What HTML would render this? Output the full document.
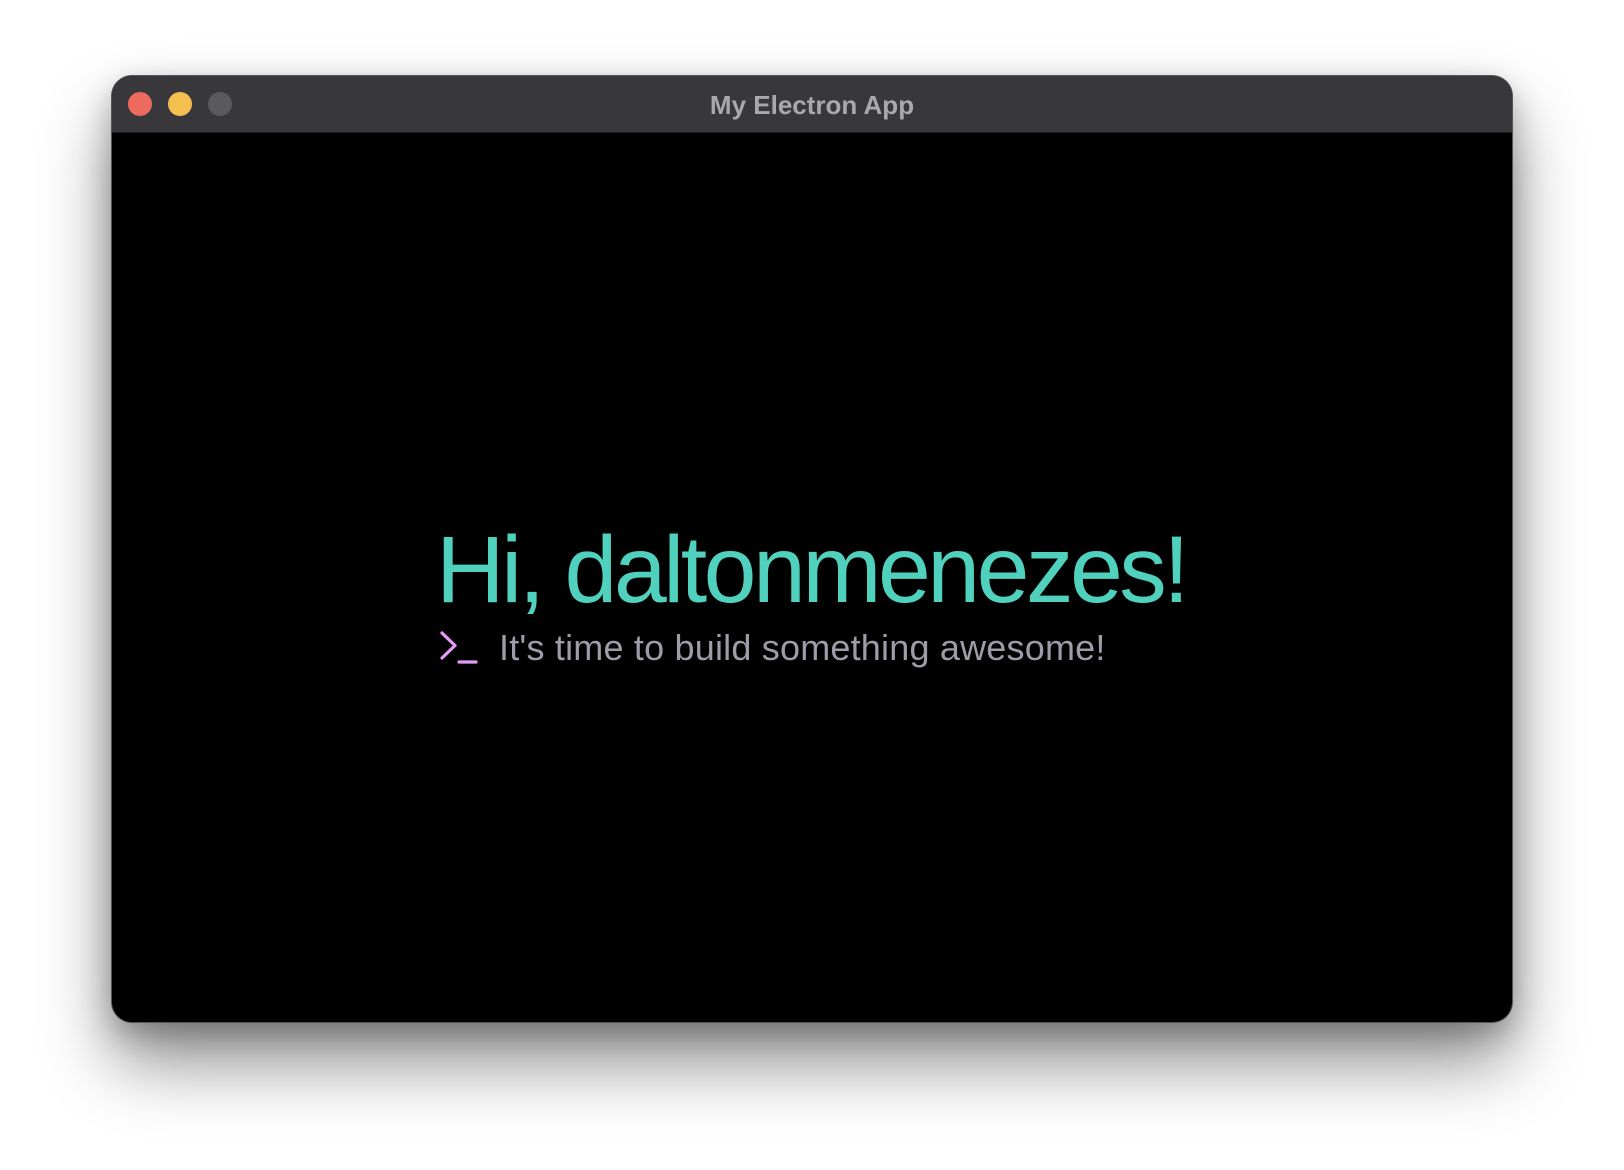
<!DOCTYPE html>
<html><head><meta charset="utf-8"><style>
html,body{margin:0;padding:0;width:1624px;height:1170px;background:#fff;overflow:hidden}
.win{position:absolute;left:112px;top:76px;width:1400px;height:946px;background:#000;border-radius:20px;overflow:hidden;box-shadow:0 0 0 1px #555,0 40px 70px rgba(0,0,0,.45),0 10px 30px rgba(0,0,0,.25)}
.bar{position:absolute;left:0;top:0;width:100%;height:56px;background:#38373c;border-bottom:1px solid #1a1a1a}
.dot{position:absolute;top:16px;width:24px;height:24px;border-radius:50%}
.title{position:absolute;left:0;width:100%;top:14px;line-height:28px;text-align:center;font:bold 26px "Liberation Sans",sans-serif;color:#a9a8ad}
.h{position:absolute;left:324px;top:0;font:95px "Liberation Sans",sans-serif;color:#4fd1bd;letter-spacing:-3.5px;line-height:1;white-space:nowrap}
.s{position:absolute;left:387px;font:36px "Liberation Sans",sans-serif;color:#9d9ca8;letter-spacing:0.2px;white-space:nowrap;line-height:1}
</style></head><body>
<div class="win">
<div class="bar">
<div class="dot" style="left:16px;background:#ed6a5e"></div>
<div class="dot" style="left:56px;background:#f5bf4f"></div>
<div class="dot" style="left:96px;background:#5a595e"></div>
<div class="title">My Electron App</div>
</div>
<div class="h" style="top:447px">Hi, daltonmenezes!</div>
<svg style="position:absolute;left:326px;top:553px" width="40" height="36" viewBox="0 0 40 36"><path d="M4 4 L17 16.5 L4 29" fill="none" stroke="#e29cf5" stroke-width="3.2" stroke-linecap="round" stroke-linejoin="round"/><path d="M21 33 L38 33" stroke="#e29cf5" stroke-width="3.2" stroke-linecap="round"/></svg>
<div class="s" style="top:554px">It's time to build something awesome!</div>
</div>
</body></html>
